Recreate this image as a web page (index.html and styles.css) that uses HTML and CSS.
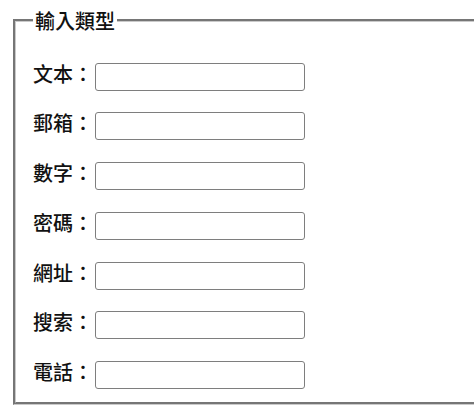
FILE: index.html
```html
<!DOCTYPE html>
<html lang="zh-Hant">
<head>
  <meta charset="UTF-8">
  <title>輸入類型</title>
  <meta name="viewport" content="width=device-width, initial-scale=1.0">
  <link rel="stylesheet" href="styles.css">
</head>
<body>
  <form class="type-form">
    <fieldset>
      <legend>輸入類型</legend>

      <div class="row">
        <label for="f-text">文本：</label>
        <input type="text" id="f-text">
      </div>
      <div class="row">
        <label for="f-email">郵箱：</label>
        <input type="email" id="f-email">
      </div>
      <div class="row">
        <label for="f-number">數字：</label>
        <input type="number" id="f-number">
      </div>
      <div class="row">
        <label for="f-password">密碼：</label>
        <input type="password" id="f-password">
      </div>
      <div class="row">
        <label for="f-url">網址：</label>
        <input type="url" id="f-url">
      </div>
      <div class="row">
        <label for="f-search">搜索：</label>
        <input type="search" id="f-search">
      </div>
      <div class="row">
        <label for="f-tel">電話：</label>
        <input type="tel" id="f-tel">
      </div>
    </fieldset>
  </form>
</body>
</html>
```

FILE: styles.css
```css
* { box-sizing: border-box; }

html, body {
  overflow: hidden;
}

body {
  margin: 0;
  background: #fff;
  color: #111;
  font-family: "Noto Sans CJK TC", "Noto Sans", sans-serif;
  font-size: 20px;
  font-weight: 500;
}

.type-form fieldset {
  margin: 6.5px -10px 0 13px;
  padding: 28px 0 13px 17px;
  border: 3px groove #cacaca;
  display: flex;
  flex-direction: column;
  gap: 21.75px;
}

.type-form legend {
  padding: 0 2px;
  line-height: 28px;
}

.row {
  display: flex;
  align-items: flex-start;
  height: 28px;
}

.row label {
  line-height: 22px;
}

.row input {
  width: 210px;
  height: 28px;
  margin: 0 0 0 1.5px;
  padding: 2px 4px;
  border: 1px solid #7e7e7e;
  border-radius: 3px;
  background: #fff;
  font-size: 16px;
  outline: none;
}

input[type="number"]::-webkit-inner-spin-button,
input[type="number"]::-webkit-outer-spin-button {
  -webkit-appearance: none;
  margin: 0;
}
```
